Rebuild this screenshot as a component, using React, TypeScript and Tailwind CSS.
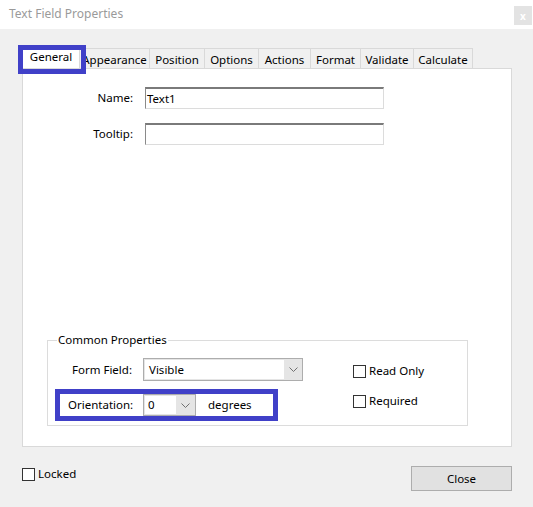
import React from 'react';

const Chevron = () => (
  <svg width="9" height="5" viewBox="0 0 9 5" fill="none">
    <path d="M0.5 0.5 L4.5 4.5 L8.5 0.5" stroke="#707070" strokeWidth="1" />
  </svg>
);

const Checkbox = ({ label }: { label: string }) => (
  <label className="flex items-center gap-[3px] h-[16px]">
    <span className="w-[13px] h-[13px] border border-[#333333] bg-white shrink-0" />
    <span>{label}</span>
  </label>
);

const tabs: { name: string; w: string }[] = [
  { name: 'Appearance', w: 'w-[70px]' },
  { name: 'Position', w: 'w-[55px]' },
  { name: 'Options', w: 'w-[54px]' },
  { name: 'Actions', w: 'w-[52px]' },
  { name: 'Format', w: 'w-[50px]' },
  { name: 'Validate', w: 'w-[53px]' },
  { name: 'Calculate', w: 'w-[59px]' },
];

export default function App() {
  return (
    <div className="w-[533px] h-[507px] bg-[#f0f0f0] flex flex-col text-[11.5px] leading-[16px] text-black font-['Noto_Sans',sans-serif] overflow-hidden">
      {/* Title bar */}
      <div className="h-[29px] bg-white flex justify-between shrink-0">
        <span className="pl-[9px] pt-[6px] text-[12px] text-[#9a9a9a]">Text Field Properties</span>
        <div className="mt-[6px] mr-[1px] w-[18px] h-[19px] bg-[#e3e3e3] flex items-center justify-center text-white text-[10px] font-bold">
          x
        </div>
      </div>

      <div className="pl-[22px] pr-[21px] pt-[17px]">
        {/* Tabs */}
        <div className="flex items-end h-[22px] relative z-10">
          <div className="relative w-[58px] h-[23px] bg-white border-x border-t border-[#d9d9d9] flex items-start justify-center pt-[3px]">
            General
            <div className="absolute left-[-5px] top-[-1px] w-[68px] h-[29px] border-[5px] border-[#4040c8]" />
          </div>
          {tabs.map((t) => (
            <div
              key={t.name}
              className={`${t.w} h-[20px] border-t border-r border-[#d9d9d9] flex items-center justify-center pt-[2px]`}
            >
              {t.name}
            </div>
          ))}
        </div>

        {/* Panel */}
        <div className="w-[490px] h-[379px] bg-white border border-[#d9d9d9] flex flex-col">
          <div className="pt-[18px] flex flex-col gap-[14px]">
            <div className="flex items-center">
              <span className="w-[110px] text-right">Name:</span>
              <div className="ml-[12px] w-[239px] h-[22px] border border-[#dcdcdc] border-t-2 border-t-[#7a7a7a] border-l-[#8a8a8a] flex items-center px-[1px]">
                Text1
              </div>
            </div>
            <div className="flex items-center">
              <span className="w-[110px] text-right">Tooltip:</span>
              <div className="ml-[12px] w-[239px] h-[22px] border border-[#dcdcdc] border-t-2 border-t-[#7a7a7a] border-l-[#8a8a8a]" />
            </div>
          </div>

          {/* Common Properties */}
          <fieldset className="mt-auto mb-[20px] ml-[24px] w-[421px] border border-[#dcdcdc] pb-[4px]">
            <legend className="ml-[9px] px-[1px]">Common Properties</legend>
            <div className="flex pt-[10px]">
              <div className="flex flex-col">
                <div className="flex items-center pl-[24px]">
                  <span className="w-[71px]">Form Field:</span>
                  <div className="w-[160px] h-[23px] border border-[#adadad] bg-[#e5e5e5] flex items-center">
                    <div className="ml-px w-[139px] h-[19px] bg-white flex items-center pl-[4px]">Visible</div>
                    <div className="flex-1 flex justify-center">
                      <Chevron />
                    </div>
                  </div>
                </div>
                <div className="mt-[8px] ml-[7px] w-[223px] h-[32px] border-[5px] border-[#4040c8] flex items-center pl-[8px]">
                  <span className="w-[75px]">Orientation:</span>
                  <div className="w-[53px] h-[22px] border border-[#adadad] bg-[#e5e5e5] flex items-center">
                    <div className="ml-px w-[31px] h-[18px] bg-white flex items-center pl-[3px]">0</div>
                    <div className="flex-1 flex justify-center">
                      <Chevron />
                    </div>
                  </div>
                  <span className="ml-[12px]">degrees</span>
                </div>
              </div>
              <div className="ml-[50px] pt-[5px] flex flex-col gap-[14px]">
                <Checkbox label="Read Only" />
                <Checkbox label="Required" />
              </div>
            </div>
          </fieldset>
        </div>

        {/* Footer */}
        <div className="mt-[19px] flex items-start justify-between">
          <Checkbox label="Locked" />
          <button className="w-[101px] h-[25px] border border-[#adadad] bg-[#e1e1e1] flex items-center justify-center">
            Close
          </button>
        </div>
      </div>
    </div>
  );
}
